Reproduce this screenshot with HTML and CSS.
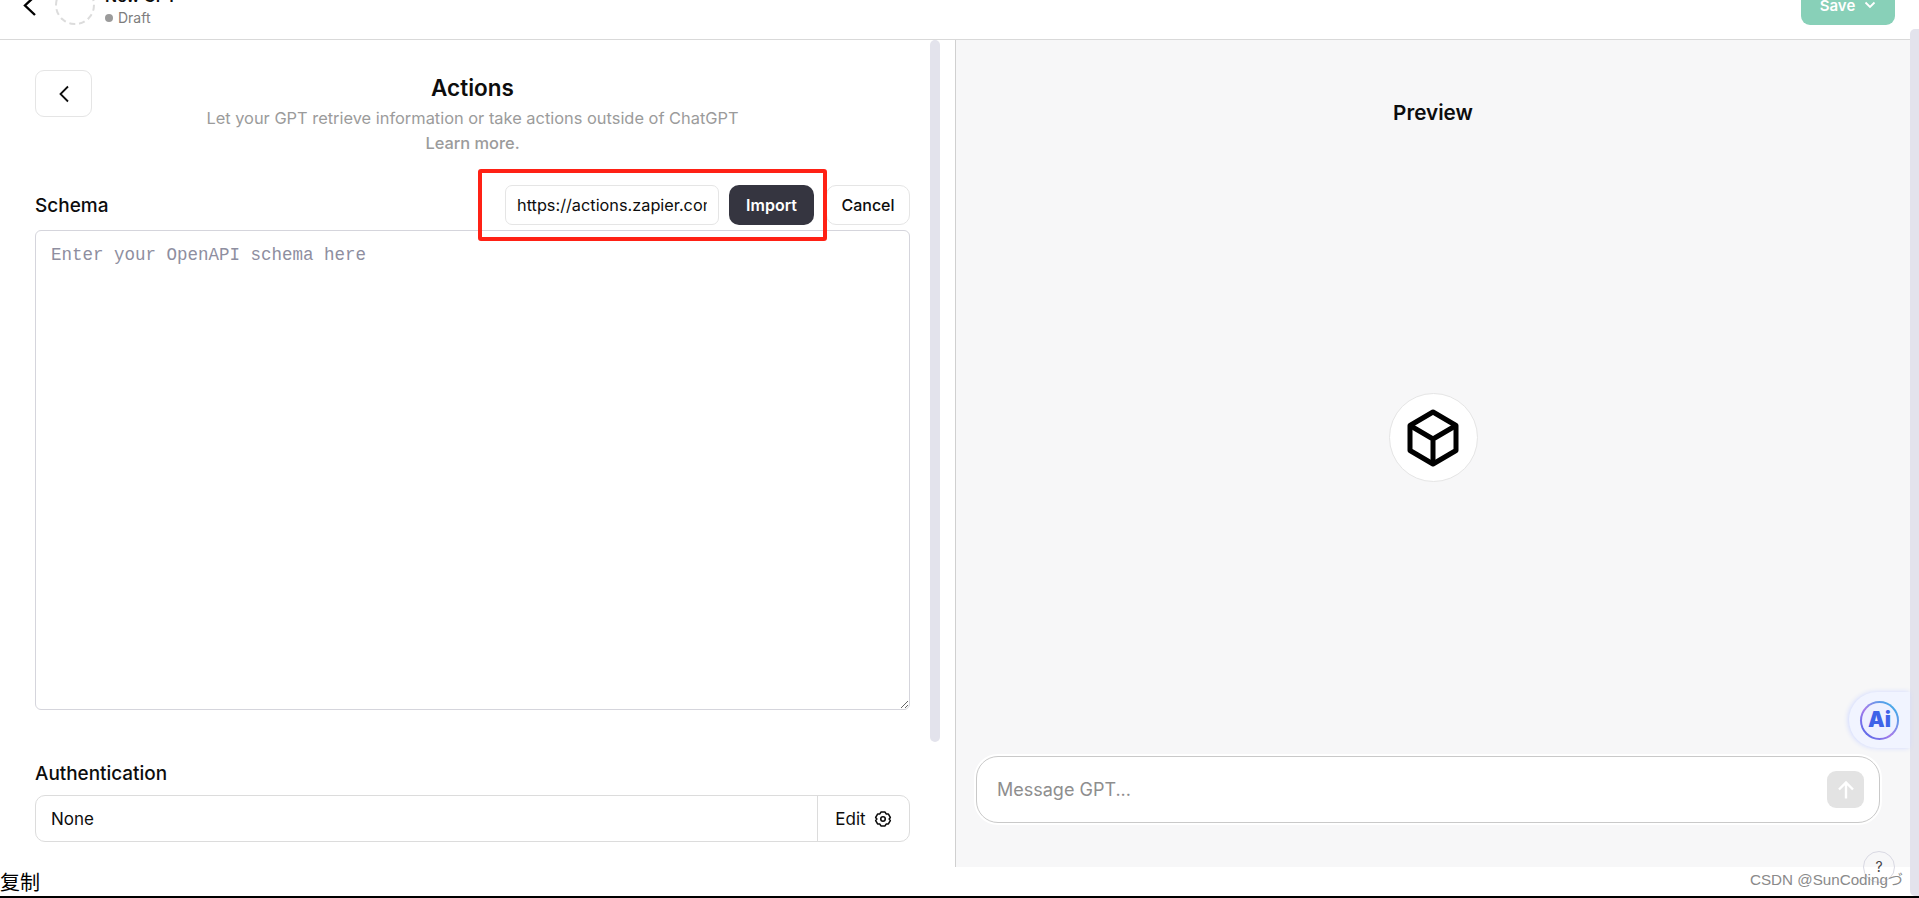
FILE: index.html
```html
<!DOCTYPE html>
<html lang="en">
<head>
  <meta charset="UTF-8">
  <meta name="viewport" content="width=device-width, initial-scale=1.0">
  <title>Actions</title>
  <link rel="stylesheet" href="styles.css">
</head>
<body>
  <header class="topbar">
    <svg class="top-back" width="16" height="24" viewBox="0 0 16 24"><path d="M13 1 3 10.5 13 20" fill="none" stroke="#000" stroke-width="2.4"/></svg>
    <div class="avatar"></div>
    <div class="gpt-name">
      <div class="gpt-title">New GPT</div>
      <div class="gpt-status"><span class="dot"></span>Draft</div>
    </div>
    <button class="save-btn">Save
      <svg width="12" height="8" viewBox="0 0 12 8"><path d="M1.5 1.5 6 6l4.500-4.500" fill="none" stroke="#fff" stroke-width="1.800"/></svg>
    </button>
  </header>

  <main class="panels">
    <section class="editor">
      <div class="editor-head">
        <button class="back-btn">
          <svg width="12" height="18" viewBox="0 0 12 18"><path d="M10 1.500 2.500 9l7.500 7.500" fill="none" stroke="#0d0d0d" stroke-width="1.800"/></svg>
        </button>
        <div class="head-text">
          <h1>Actions</h1>
          <p>Let your GPT retrieve information or take actions outside of ChatGPT</p>
          <a href="#">Learn more.</a>
        </div>
      </div>

      <div class="schema-row">
        <label>Schema</label>
        <input class="url-input" type="text" value="https://actions.zapier.com/gpt/api/v1/dynamic/openapi.json">
        <button class="import-btn">Import</button>
        <button class="cancel-btn">Cancel</button>
      </div>
      <textarea class="schema-box" placeholder="Enter your OpenAPI schema here"></textarea>

      <h2 class="auth-label">Authentication</h2>
      <div class="auth-box">
        <span class="auth-value">None</span>
        <button class="auth-edit">Edit
          <svg width="18" height="18" viewBox="0 0 16 16" fill="none" stroke="#0d0d0d" stroke-width="1.400"><path d="M6.200 1.800h3.600l1 1.700 2 .1 1.700 3-1 1.400 1 1.400-1.700 3-2 .1-1 1.700H6.200l-1-1.700-2-.1-1.700-3 1-1.400-1-1.400 1.700-3 2-.1Z" stroke-linejoin="round"/><circle cx="8" cy="8" r="2"/></svg>
        </button>
      </div>

      <div class="inner-scroll"></div>
      <div class="annotation"></div>
    </section>

    <section class="preview">
      <h2 class="preview-title">Preview</h2>
      <div class="preview-center">
        <div class="cube-circle">
          <svg width="54" height="60" viewBox="0 0 54 60" fill="none" stroke="#000" stroke-width="5" stroke-linejoin="round"><path d="M27 4 50 17.500V42.500L27 56 4 42.500V17.500Z"/><path d="M4 17.500 27 31 50 17.500M27 31V56"/></svg>
        </div>
      </div>
      <div class="message-box">
        <span class="message-hint">Message GPT...</span>
        <button class="send-btn">
          <svg width="18" height="20" viewBox="0 0 18 20" fill="none" stroke="#fff" stroke-width="2.400"><path d="M9 18.500V3M2 9.500 9 2.500l7 7"/></svg>
        </button>
      </div>
    </section>
  </main>

  <footer class="copy-row">复制</footer>

  <div class="page-scroll"></div>
  <div class="ai-bubble">
    <div class="ai-ring"><span class="ai-text">Ai</span></div>
  </div>
  <div class="help-btn">?</div>
  <div class="watermark">CSDN @SunCodingづ</div>
</body>
</html>
```

FILE: styles.css
```css
* {
  box-sizing: border-box;
}
html, body {
  margin: 0;
  height: 898px;
  overflow: hidden;
}
body {
  position: relative;
  display: flex;
  flex-direction: column;
  background: #fff;
  color: #0d0d0d;
  font-family: Inter, "Noto Sans CJK SC", sans-serif;
}
button {
  font-family: inherit;
  cursor: pointer;
}

/* top bar, cut off by the top of the screenshot */
.topbar {
  flex: none;
  height: 40px;
  display: flex;
  align-items: flex-end;
  overflow: hidden;
  border-bottom: 1px solid #d9d9d9;
  padding-left: 22px;
  padding-right: 24px;
}
.top-back {
  margin-bottom: 20px;
}
.avatar {
  width: 40px;
  height: 40px;
  margin-left: 17px;
  margin-bottom: 14px;
  border: 2px dashed #dcdcdc;
  border-radius: 50%;
  flex: none;
}
.gpt-name {
  margin-left: 10px;
  margin-bottom: 12px;
}
.gpt-title {
  font-size: 16px;
  font-weight: 600;
  line-height: 20px;
  height: 20px;
  margin-bottom: 3px;
}
.gpt-status {
  display: flex;
  align-items: center;
  font-size: 14px;
  line-height: 18px;
  color: #7d7d7d;
}
.dot {
  width: 8px;
  height: 8px;
  border-radius: 50%;
  background: #9b9b9b;
  margin-right: 5px;
}
.save-btn {
  margin-left: auto;
  margin-bottom: 14px;
  width: 94px;
  height: 40px;
  padding: 0;
  border: none;
  border-radius: 9px;
  background: #88d0b8;
  color: #fff;
  font-size: 15px;
  font-weight: 600;
  display: flex;
  align-items: center;
  justify-content: center;
  gap: 9px;
}

.panels {
  flex: none;
  height: 827px;
  display: flex;
}

/* left column */
.editor {
  position: relative;
  width: 956px;
  flex: none;
  padding: 30px 45px 0 35px;
  border-right: 1px solid #d0d0d0;
}
.editor-head {
  display: grid;
  grid-template-columns: 57px 1fr 57px;
  height: 115px;
}
.back-btn {
  width: 57px;
  height: 47px;
  background: #fff;
  border: 1px solid #e5e5e5;
  border-radius: 9px;
  display: flex;
  align-items: center;
  justify-content: center;
}
.head-text {
  text-align: center;
  padding-top: 4px;
}
.head-text h1 {
  margin: 0;
  font-size: 22.500px;
  line-height: 28px;
  font-weight: 600;
}
.head-text p {
  margin: 4px 0 0;
  font-size: 16.400px;
  line-height: 25px;
  color: #9b9b9b;
}
.head-text a {
  display: block;
  font-size: 16.400px;
  line-height: 25px;
  font-weight: 500;
  color: #9b9b9b;
  text-decoration: none;
}
.schema-row {
  display: flex;
  align-items: center;
  height: 40px;
}
.schema-row label {
  font-size: 19px;
  font-weight: 500;
  margin-right: auto;
}
.url-input {
  width: 214px;
  height: 40px;
  padding: 0 11px;
  border: 1px solid #e5e5e5;
  border-radius: 7px;
  font-family: inherit;
  font-size: 16.300px;
  color: #0d0d0d;
  outline: none;
}
.import-btn {
  width: 85px;
  height: 40px;
  margin-left: 10px;
  border: none;
  border-radius: 10px;
  background: #353540;
  color: #fff;
  font-size: 16px;
  font-weight: 600;
}
.cancel-btn {
  width: 84px;
  height: 40px;
  margin-left: 12px;
  background: #fff;
  border: 1px solid #e5e5e5;
  border-radius: 10px;
  color: #0d0d0d;
  font-size: 16px;
  font-weight: 500;
}
.schema-box {
  display: block;
  width: 875px;
  height: 480px;
  margin-top: 5px;
  padding: 12px 15px;
  border: 1px solid #d5d5dc;
  border-radius: 6px;
  font-family: "Liberation Mono", monospace;
  font-size: 17.500px;
  line-height: 24px;
  outline: none;
}
.schema-box::placeholder {
  color: #8e8ea0;
}
.auth-label {
  margin: 52px 0 0;
  font-size: 18.900px;
  line-height: 24px;
  font-weight: 500;
}
.auth-box {
  display: flex;
  align-items: center;
  height: 47px;
  margin-top: 9px;
  border: 1px solid #dcdcdc;
  border-radius: 10px;
}
.auth-value {
  flex: 1;
  padding-left: 15px;
  font-size: 17px;
}
.auth-edit {
  width: 92px;
  height: 100%;
  display: flex;
  align-items: center;
  justify-content: center;
  gap: 8px;
  background: none;
  border: none;
  border-left: 1px solid #dcdcdc;
  color: #0d0d0d;
  font-size: 17px;
  padding: 0;
}
.inner-scroll {
  position: absolute;
  left: 930px;
  top: 0;
  width: 10px;
  height: 702px;
  background: #e3e3ec;
  border-radius: 5px;
}
.annotation {
  position: absolute;
  left: 478px;
  top: 129px;
  width: 349px;
  height: 72px;
  border: 4px solid #ff2115;
  border-radius: 3px;
}

/* right column */
.preview {
  flex: 1;
  display: flex;
  flex-direction: column;
  align-items: center;
  margin-right: 9px;
  background: #f7f7f8;
  padding: 0 0 44px;
}
.preview-title {
  margin: 60px 0 0;
  font-size: 20.700px;
  line-height: 26px;
  font-weight: 600;
}
.preview-center {
  flex: 1;
  display: flex;
  align-items: flex-start;
  padding-top: 267px;
}
.cube-circle {
  width: 89px;
  height: 89px;
  border: 1px solid #e5e5e5;
  border-radius: 50%;
  background: #fff;
  display: flex;
  align-items: center;
  justify-content: center;
}
.message-box {
  align-self: flex-start;
  width: 904px;
  height: 67px;
  margin-left: 20px;
  display: flex;
  align-items: center;
  justify-content: space-between;
  padding: 0 15px 0 20px;
  background: #fff;
  border: 1px solid #c9c9c9;
  border-radius: 22px;
  box-shadow: 0 0 0 2px #fff;
}
.message-hint {
  color: #8e8e8e;
  font-size: 18px;
}
.send-btn {
  width: 37px;
  height: 37px;
  padding: 0;
  border: none;
  border-radius: 9px;
  background: #e3e3e3;
  display: flex;
  align-items: center;
  justify-content: center;
}

.copy-row {
  flex: none;
  height: 31px;
  padding-top: 4px;
  border-bottom: 2px solid #000;
  font-size: 20px;
  line-height: 25px;
  color: #000;
}

/* things lying over the page */
.page-scroll {
  position: absolute;
  right: 0;
  top: 29px;
  width: 9px;
  height: 867px;
  background: #e3e3ec;
  border-radius: 5px 0 0 5px;
}
.ai-bubble {
  position: absolute;
  left: 1849px;
  top: 692px;
  width: 61px;
  height: 56px;
  display: flex;
  align-items: center;
  padding-left: 11px;
  background: #f1f4ff;
  border-radius: 28px 0 0 28px;
  box-shadow: -1px 0 5px #cfd8ff;
}
.ai-ring {
  width: 39px;
  height: 39px;
  padding: 2px;
  border-radius: 50%;
  background: linear-gradient(45deg, #3f63e8, #a77bea 45%, #22b8e8);
}
.ai-text {
  display: block;
  width: 35px;
  height: 35px;
  border-radius: 50%;
  background: #eef1ff;
  text-align: center;
  font-size: 21px;
  font-weight: 900;
  line-height: 34px;
  color: #3f63e8;
}
.help-btn {
  position: absolute;
  left: 1863px;
  top: 851px;
  width: 32px;
  height: 32px;
  border: 1px solid #d9d9e3;
  border-radius: 50%;
  text-align: center;
  font-size: 14px;
  line-height: 30px;
  color: #444;
}
.watermark {
  position: absolute;
  left: 1750px;
  top: 870px;
  font-family: "Liberation Sans", "Noto Sans CJK JP", sans-serif;
  font-size: 15.200px;
  line-height: 20px;
  color: #8a8a8a;
}
```
